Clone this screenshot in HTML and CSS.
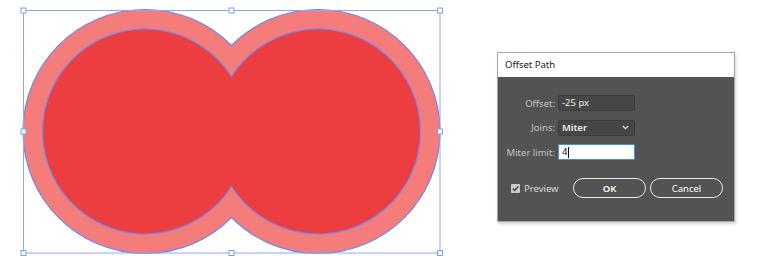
FILE: index.html
```html
<!DOCTYPE html>
<html>
<head>
<meta charset="utf-8">
<link rel="stylesheet" href="styles.css">
</head>
<body>
<div class="stage">
  <svg class="canvas" width="460" height="263" viewBox="0 0 460 263">
    <path class="outer" d="M231.5 45.5 A122 122 0 1 0 231.5 217.5 A122 122 0 1 0 231.5 45.5 Z"/>
    <path class="inner" d="M231.5 76.5 A102.5 102.5 0 1 0 231.5 186.5 A102.5 102.5 0 1 0 231.5 76.5 Z"/>
    <rect class="bbox" x="23.5" y="10.5" width="416.5" height="242.5"/>
    <rect class="handle" x="21" y="8" width="5" height="5"/>
    <rect class="handle" x="229" y="8" width="5" height="5"/>
    <rect class="handle" x="437.5" y="8" width="5" height="5"/>
    <rect class="handle" x="21" y="129" width="5" height="5"/>
    <rect class="handle" x="437.5" y="129" width="5" height="5"/>
    <rect class="handle" x="21" y="250.5" width="5" height="5"/>
    <rect class="handle" x="229" y="250.5" width="5" height="5"/>
    <rect class="handle" x="437.5" y="250.5" width="5" height="5"/>
  </svg>

  <div class="dialog">
    <div class="titlebar">Offset Path</div>
    <div class="body">
      <div class="form">
        <label class="lbl">Offset:</label>
        <div class="field dark">-25 px</div>
        <label class="lbl">Joins:</label>
        <div class="field dark select"><span>Miter</span>
          <svg class="chev" width="7" height="5" viewBox="0 0 7 5"><path d="M0.8 1 L3.5 3.6 L6.2 1"/></svg>
        </div>
        <label class="lbl">Miter limit:</label>
        <div class="field light">4<span class="caret"></span></div>
      </div>
      <div class="actions">
        <div class="check">
          <span class="box"><svg width="9" height="9" viewBox="0 0 9 9"><path d="M1.8 4.6 L3.7 6.5 L7.3 2.4"/></svg></span>
          <span>Preview</span>
        </div>
        <div class="btn ok">OK</div>
        <div class="btn">Cancel</div>
      </div>
    </div>
  </div>
</div>
</body>
</html>
```

FILE: styles.css
```css
html, body {
  margin: 0;
  padding: 0;
  background: #ffffff;
}
body {
  width: 768px;
  height: 263px;
  overflow: hidden;
  font-family: "Noto Sans", "Open Sans", sans-serif;
}
.stage {
  display: flex;
  align-items: flex-start;
}
.canvas {
  display: block;
  flex: none;
}
.outer {
  fill: #f47d7c;
  stroke: #7186ee;
  stroke-width: 1.2;
}
.inner {
  fill: #ec3e41;
  stroke: #7788ec;
  stroke-width: 1.2;
}
.bbox {
  fill: none;
  stroke: #8da6f6;
  stroke-width: 1;
}
.handle {
  fill: #ffffff;
  stroke: #7f9cf5;
  stroke-width: 1;
}
.dialog {
  margin-left: 37px;
  margin-top: 52px;
  width: 236px;
  border: 1px solid #a8a8a8;
  box-shadow: 1px 2px 3px rgba(0,0,0,0.18);
  flex: none;
}
.titlebar {
  height: 24px;
  background: #ffffff;
  color: #1c1c1c;
  font-size: 9.5px;
  line-height: 24px;
  padding-left: 7px;
}
.body {
  background: #535353;
  height: 144px;
  padding-top: 18px;
  box-sizing: border-box;
}
.form {
  display: grid;
  grid-template-columns: 57px 77px;
  column-gap: 3px;
  row-gap: 8.5px;
  align-items: center;
}
.lbl {
  text-align: right;
  color: #c4c4c4;
  font-size: 9.5px;
}
.field {
  height: 16px;
  box-sizing: border-box;
  border-radius: 2px;
  font-size: 9.5px;
  line-height: 14px;
  padding-left: 3px;
  display: flex;
  align-items: center;
}
.dark {
  background: #464646;
  border: 1px solid #3c3c3c;
  color: #ececec;
}
.select {
  justify-content: space-between;
  padding-right: 5px;
  font-weight: 600;
}
.chev path {
  fill: none;
  stroke: #e0e0e0;
  stroke-width: 1.3;
}
.light {
  background: #ffffff;
  border: 1px solid #3d8ee6;
  border-radius: 1px;
  color: #111111;
}
.caret {
  display: inline-block;
  width: 1px;
  height: 11px;
  background: #111111;
  margin-left: 1px;
}
.actions {
  display: flex;
  align-items: center;
  margin-top: 18px;
  padding-left: 13px;
}
.check {
  display: flex;
  align-items: center;
  gap: 4px;
  color: #d8d8d8;
  font-size: 9.5px;
  width: 62px;
}
.box {
  width: 9px;
  height: 9px;
  background: #c9c9c9;
  border-radius: 1px;
  display: flex;
}
.box path {
  fill: none;
  stroke: #4a4a4a;
  stroke-width: 1.5;
}
.btn {
  width: 73px;
  height: 20px;
  box-sizing: border-box;
  border: 1.6px solid #ececec;
  border-radius: 10px;
  color: #ffffff;
  font-size: 9.5px;
  display: flex;
  align-items: center;
  justify-content: center;
  margin-right: 4px;
}
.ok {
  font-weight: 600;
}
```
